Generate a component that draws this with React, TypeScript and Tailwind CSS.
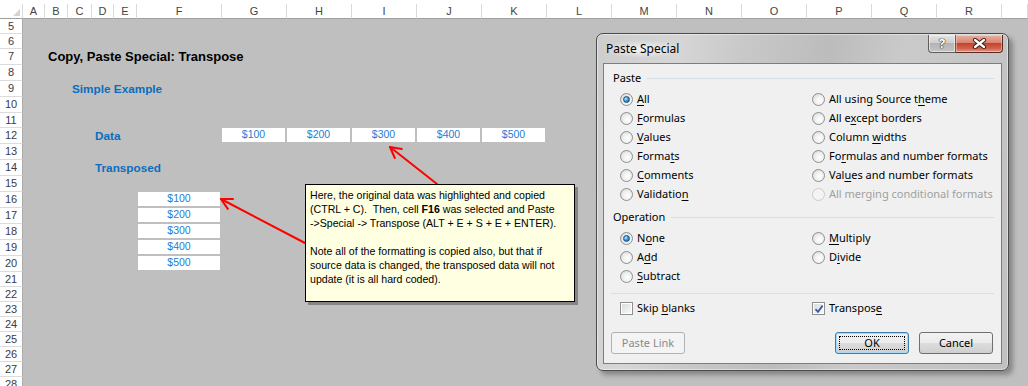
import React from "react";

const letters = ["A","B","C","D","E","F","G","H","I","J","K","L","M","N","O","P","Q","R",""];
const rowNums = Array.from({ length: 24 }, (_, i) => i + 5);

function M({ t, u, className = "" }: { t: string; u?: number; className?: string }) {
  if (u === undefined) return <span className={"whitespace-nowrap " + className}>{t}</span>;
  return (
    <span className={"whitespace-nowrap " + className}>
      {t.slice(0, u)}
      <span className="underline underline-offset-[2px] decoration-[1px]">{t[u]}</span>
      {t.slice(u + 1)}
    </span>
  );
}

function Radio({ checked, disabled }: { checked?: boolean; disabled?: boolean }) {
  return (
    <span
      className={
        disabled
          ? "flex h-[13px] w-[13px] shrink-0 items-center justify-center rounded-full border border-[#cacaca] bg-[#f4f4f4]"
          : "flex h-[13px] w-[13px] shrink-0 items-center justify-center rounded-full border border-[#8e8f8f] bg-[radial-gradient(circle_at_60%_60%,#ffffff_0%,#f0f0f0_45%,#cfcfcf_100%)]"
      }
    >
      {checked && (
        <span className="h-[7px] w-[7px] rounded-full border border-[#1c4f7c] bg-[radial-gradient(circle_at_35%_35%,#c6ecff_0%,#3b9de0_45%,#0e4f88_100%)]" />
      )}
    </span>
  );
}

function Check({ checked }: { checked?: boolean }) {
  return (
    <span className="relative flex h-[13px] w-[13px] shrink-0 items-center justify-center border border-[#8e8f8f] bg-white p-px">
      <span className="h-full w-full bg-gradient-to-br from-[#dcdcdc] to-[#f8f8f8]" />
      {checked && (
        <svg className="absolute left-[1px] top-[1px]" width="10" height="10" viewBox="0 0 10 10">
          <path d="M1.5 5.2 L4 7.8 L8.6 1.6" fill="none" stroke="#3d58a6" strokeWidth="1.8" />
        </svg>
      )}
    </span>
  );
}

function Opt({ t, u, checked, disabled }: { t: string; u?: number; checked?: boolean; disabled?: boolean }) {
  return (
    <div className="flex h-[19px] items-center gap-[4px]">
      <Radio checked={checked} disabled={disabled} />
      <M t={t} u={u} className={disabled ? "text-[#a0a0a0]" : "text-black"} />
    </div>
  );
}

function GroupHead({ t }: { t: string }) {
  return (
    <div className="flex h-[17px] items-center pl-[2px]">
      <span className="text-black">{t}</span>
      <span className="ml-[6px] h-px flex-1 bg-[#d5dfe5]" />
    </div>
  );
}

export default function App() {
  return (
    <div className="relative h-[386px] w-[1028px] overflow-hidden bg-white font-['Liberation_Sans',Arial,sans-serif]">
      {/* Spreadsheet grid */}
      <div className="grid h-[392px] w-[1028px] grid-cols-[23px_22px_23px_24px_22px_23px_85px_repeat(12,65px)_1fr] grid-rows-[19px_15px_15px_16px_16px_16px_16px_15px_repeat(9,16px)_repeat(8,15px)]">
        {/* gray sheet area */}
        <div className="col-[2/-1] row-[2/-1] bg-[#bfbfbf]" />

        {/* corner */}
        <div className="col-[1] row-[1] mt-[4px] flex h-[15px] items-end justify-end border-b border-r border-b-[#9f9f9f] border-r-[#d9d9d9] pb-[2px] pr-[2px]">
          <svg width="7" height="7" viewBox="0 0 7 7">
            <path d="M7 0 L7 7 L0 7 Z" fill="#d4d4d4" />
          </svg>
        </div>

        {/* column headers */}
        {letters.map((l, i) => (
          <div
            key={"c" + i}
            style={{ gridColumn: i + 2, gridRow: 1 }}
            className="mt-[4px] flex h-[15px] items-center justify-center border-b border-r border-b-[#9f9f9f] border-r-[#d9d9d9] text-[11px] text-[#444]"
          >
            {l}
          </div>
        ))}

        {/* row headers */}
        {rowNums.map((n, i) => (
          <div
            key={"r" + n}
            style={{ gridColumn: 1, gridRow: i + 2 }}
            className="flex items-center justify-center border-b border-r border-b-[#dcdcdc] border-r-[#ababab] text-[11px] text-[#3a3a4a]"
          >
            {n}
          </div>
        ))}

        {/* texts */}
        <div className="col-[3/12] row-[4] flex items-center whitespace-nowrap pl-[3px] text-[13px] font-bold text-black">
          Copy, Paste Special: Transpose
        </div>
        <div className="col-[4/12] row-[6] flex items-center whitespace-nowrap pl-[4px] text-[11.75px] font-bold text-[#0a6ebd]">
          Simple Example
        </div>
        <div className="col-[5/12] row-[9] flex items-center whitespace-nowrap pl-[3px] text-[11.75px] font-bold text-[#0a6ebd]">
          Data
        </div>
        <div className="col-[5/12] row-[11] flex items-center whitespace-nowrap pl-[3px] text-[11.75px] font-bold text-[#0a6ebd]">
          Transposed
        </div>

        {/* data row */}
        {["$100", "$200", "$300", "$400", "$500"].map((v, i) => (
          <div
            key={"d" + v}
            style={{ gridColumn: 8 + i, gridRow: 9 }}
            className="mb-[2px] mr-[2px] flex items-center justify-center bg-white text-[10.5px] text-[#1f7dd3]"
          >
            {v}
          </div>
        ))}

        {/* transposed column */}
        {["$100", "$200", "$300", "$400", "$500"].map((v, i) => (
          <div
            key={"t" + v}
            style={{ gridColumn: 7, gridRow: 13 + i }}
            className="mb-[2px] ml-px mr-[2px] flex items-center justify-center bg-white text-[10.5px] text-[#1f7dd3]"
          >
            {v}
          </div>
        ))}
      </div>

      {/* arrows */}
      <svg className="pointer-events-none absolute left-0 top-0" width="1028" height="386" viewBox="0 0 1028 386">
        <g stroke="#ff0000" strokeWidth="2" fill="none" strokeLinecap="round" strokeLinejoin="round">
          <line x1="437" y1="184" x2="390" y2="147" />
          <polyline points="394.8,158 390,147 401.8,149.1" />
          <line x1="305" y1="243" x2="221" y2="199" />
          <polyline points="227.8,208.9 221,199 233,198.9" />
        </g>
      </svg>

      {/* comment box */}
      <div className="absolute left-[305px] top-[184px] h-[118px] w-[270px] border border-black bg-[#ffffe1] pl-[4px] pt-[3px] text-[10.6px] leading-[14px] text-black shadow-[3px_3px_0_#858585]">
        <div className="whitespace-pre">Here, the original data was highlighted and copied</div>
        <div className="whitespace-pre">
          (CTRL + C).  Then, cell <b>F16</b> was selected and Paste
        </div>
        <div className="whitespace-pre">{"->Special -> Transpose (ALT + E + S + E + ENTER)."}</div>
        <div className="h-[14px]" />
        <div className="whitespace-pre">Note all of the formatting is copied also, but that if</div>
        <div className="whitespace-pre">source data is changed, the transposed data will not</div>
        <div className="whitespace-pre">update (it is all hard coded).</div>
      </div>

      {/* Paste Special dialog */}
      <div className="absolute left-[596px] top-[33px] flex h-[338px] w-[413px] flex-col rounded-[7px] border border-[#4b4b4b] bg-[linear-gradient(100deg,#cdcdcd_0%,#d6d6d6_18%,#c8c8c8_32%,#bcbcbc_50%,#cacaca_66%,#c0c0c0_100%)] font-['Noto_Sans','Open_Sans',sans-serif] text-[11px] shadow-[4px_4px_5px_rgba(0,0,0,0.3),inset_0_0_0_1px_rgba(255,255,255,0.45)]">
        {/* title bar */}
        <div className="relative flex h-[29px] items-center pl-[5px]">
          <span className="whitespace-nowrap rounded-full bg-[radial-gradient(closest-side,rgba(255,255,255,0.75),rgba(255,255,255,0))] px-[4px] text-[12px] text-black">
            Paste Special
          </span>
          <div className="absolute right-[5px] top-[1px] flex">
            <div className="flex h-[18px] w-[28px] items-center justify-center rounded-bl-[4px] border border-t-0 border-[#5e5e5e] bg-[linear-gradient(#e4e4e4_0%,#cfcfcf_45%,#b4b4b4_50%,#c4c4c4_100%)] shadow-[inset_0_0_0_1px_rgba(255,255,255,0.5)]">
              <span className="text-[13px] font-bold leading-none text-white [text-shadow:0_0_1px_#222,0_0_1px_#222,0_0_1px_#222]">
                ?
              </span>
            </div>
            <div className="flex h-[18px] w-[47px] items-center justify-center rounded-br-[4px] border border-l-0 border-t-0 border-[#5a2b25] bg-[linear-gradient(#eab0a3_0%,#d98571_45%,#c5432c_50%,#d2644e_80%,#e79a88_100%)] shadow-[inset_0_0_0_1px_rgba(255,255,255,0.35)]">
              <svg width="15" height="11" viewBox="0 0 15 11">
                <path d="M3 2 L12 9 M12 2 L3 9" stroke="#3b1b16" strokeWidth="4.2" strokeLinecap="round" />
                <path d="M3 2 L12 9 M12 2 L3 9" stroke="#ffffff" strokeWidth="2.3" strokeLinecap="round" />
              </svg>
            </div>
          </div>
        </div>

        {/* client area */}
        <div className="mx-[6px] mb-[6px] flex flex-1 flex-col border border-[#7d7d7d] bg-[#f0f0f0] px-[7px] pt-[6px]">
          <GroupHead t="Paste" />
          <div className="mt-[3px] grid grid-cols-[192px_1fr] pl-[9px]">
            <div className="flex flex-col">
              <Opt t="All" u={0} checked />
              <Opt t="Formulas" u={0} />
              <Opt t="Values" u={0} />
              <Opt t="Formats" u={5} />
              <Opt t="Comments" u={0} />
              <Opt t="Validation" u={9} />
            </div>
            <div className="flex flex-col">
              <Opt t="All using Source theme" u={18} />
              <Opt t="All except borders" u={5} />
              <Opt t="Column widths" u={7} />
              <Opt t="Formulas and number formats" u={2} />
              <Opt t="Values and number formats" u={3} />
              <Opt t="All merging conditional formats" disabled />
            </div>
          </div>

          <div className="mt-[5px]">
            <GroupHead t="Operation" />
          </div>
          <div className="mt-[3px] grid grid-cols-[192px_1fr] pl-[9px]">
            <div className="flex flex-col">
              <Opt t="None" u={1} checked />
              <Opt t="Add" u={1} />
              <Opt t="Subtract" u={0} />
            </div>
            <div className="flex flex-col">
              <Opt t="Multiply" u={0} />
              <Opt t="Divide" u={1} />
            </div>
          </div>

          <div className="mt-[7px] h-px bg-[#d5dfe5]" />

          <div className="mt-[5px] grid grid-cols-[192px_1fr] pl-[9px]">
            <div className="flex h-[19px] items-center gap-[4px]">
              <Check />
              <M t="Skip blanks" u={5} />
            </div>
            <div className="flex h-[19px] items-center gap-[4px]">
              <Check checked />
              <M t="Transpose" u={8} />
            </div>
          </div>

          <div className="mt-[14px] flex items-center">
            <div className="flex h-[22px] w-[74px] items-center justify-center rounded-[3px] border border-[#adb2b5] bg-[#f4f4f4] text-[#8a8a8a]">
              Paste Link
            </div>
            <div className="relative ml-auto flex h-[22px] w-[74px] items-center justify-center rounded-[3px] border border-[#3c7fb1] bg-[linear-gradient(#f2f2f2_0%,#ebebeb_50%,#dddddd_50%,#cfcfcf_100%)] text-black shadow-[inset_0_0_0_1px_#a8d8f8]">
              <span className="absolute inset-[3px] border border-dotted border-black" />
              OK
            </div>
            <div className="ml-[10px] mr-[1px] flex h-[22px] w-[74px] items-center justify-center rounded-[3px] border border-[#707070] bg-[linear-gradient(#f2f2f2_0%,#ebebeb_50%,#dddddd_50%,#cfcfcf_100%)] text-black">
              Cancel
            </div>
          </div>
        </div>
      </div>
    </div>
  );
}
